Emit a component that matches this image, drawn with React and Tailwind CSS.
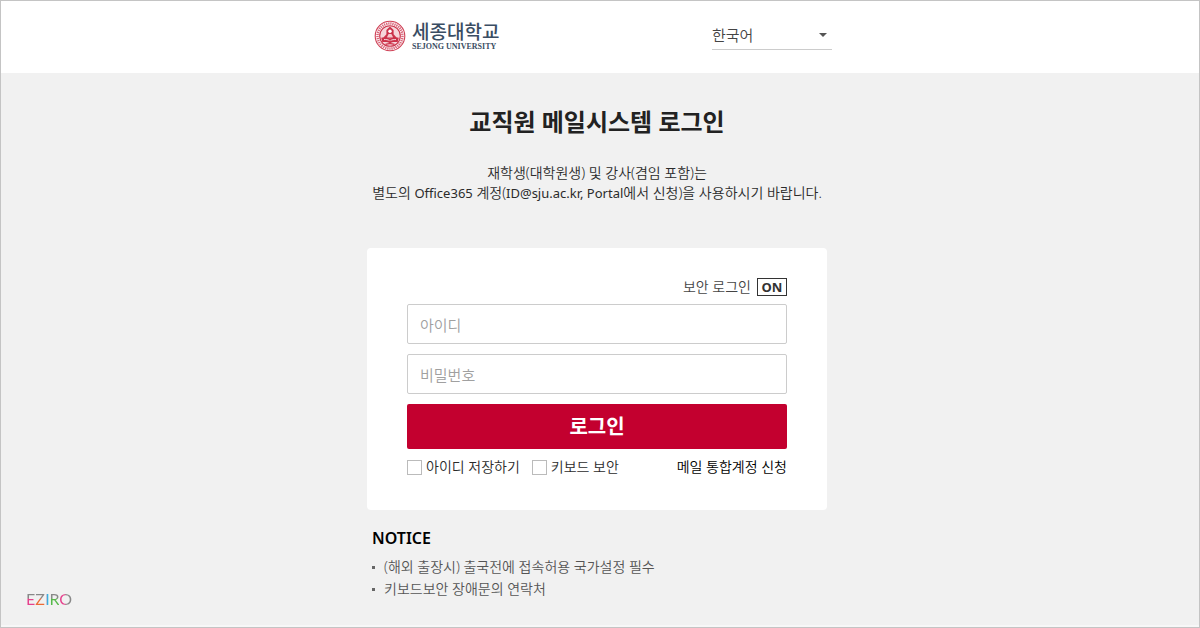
import { useState } from 'react';

const notices = [
  '(해외 출장시) 출국전에 접속허용 국가설정 필수',
  '키보드보안 장애문의 연락처',
];

function Emblem() {
  return (
    <svg viewBox="0 0 32 32" className="size-8 shrink-0" aria-hidden="true">
      <circle cx="16" cy="16" r="14.8" fill="#fff" stroke="#cf4055" strokeWidth="1.1" />
      <circle cx="16" cy="16" r="12.5" fill="none" stroke="#d8667a" strokeWidth="2.5" strokeDasharray="1.3 0.8" />
      <circle cx="16" cy="16" r="10.3" fill="#f6d5da" stroke="#cb3149" strokeWidth="1.1" />
      <path d="M16 6.4 19.6 10v4.2l4 4.6H8.400l4-4.600V10Z" fill="#cb3149" />
      <circle cx="16" cy="11.2" r="1.7" fill="#fff" />
      <path d="M14.6 14h2.8l1.8 3.4h-6.4Z" fill="#f5c6cd" />
      <path d="M7.2 17.8c3-.6 6.600-.4 8.800 1.200 2.200-1.600 5.800-1.800 8.800-1.200l-1.200 4.400c-2.600-.5-5.600-.2-7.600 1-2-1.200-5-1.500-7.600-1Z" fill="#cb3149" />
      <path d="M10 19.600c2-.2 4.200.1 5.500 1M22 19.600c-2-.2-4.200.1-5.500 1" fill="none" stroke="#fff" strokeWidth=".8" />
      <path d="M11.500 24.400c2.800-1 6.200-1 9 0" fill="none" stroke="#cb3149" strokeWidth="1.200" />
    </svg>
  );
}

function Check({ id, label }) {
  return (
    <label htmlFor={id} className="flex items-center gap-1">
      <input
        id={id}
        type="checkbox"
        className="size-[15px] shrink-0 appearance-none border border-[#bbb] bg-white checked:bg-[#c3002f]"
      />
      {label}
    </label>
  );
}

export default function App() {
  const [secure, setSecure] = useState(true);
  const field =
    'h-10 w-full rounded-xs border border-[#ccc] bg-white px-3 pt-0.5 text-[15px] text-[#333] placeholder:text-[#a0a0a0] outline-none focus:border-[#888]';

  return (
    <div className="flex min-h-screen flex-col border border-[#c4c4c4] bg-[#f1f1f1] font-['Noto_Sans','Noto_Sans_CJK_KR',sans-serif] font-[350] text-[#2b2b2b]">
      <header className="bg-white pr-1.5">
        <div className="mx-auto flex h-[72px] w-full max-w-[460px] items-center justify-between pb-[3px]">
          <a href="#home" className="ml-[7px] flex items-center gap-1.5">
            <Emblem />
            <span className="flex flex-col text-[#3a4d63]">
              <span className="font-['Noto_Sans_CJK_KR',sans-serif] text-[19px] leading-[22px] font-medium">세종대학교</span>
              <span className="font-['Liberation_Serif',serif] text-[8px] leading-[10px] font-bold">SEJONG UNIVERSITY</span>
            </span>
          </a>
          <div className="-mr-[5px] grid w-[120px] items-center border-b border-[#ccc]">
            <select
              aria-label="언어"
              className="col-start-1 row-start-1 h-7 appearance-none bg-transparent text-[15px] text-[#444] outline-none"
            >
              <option>한국어</option>
              <option>English</option>
            </select>
            <svg viewBox="0 0 8 4" className="pointer-events-none col-start-1 row-start-1 mr-[5px] h-1 w-2 justify-self-end" aria-hidden="true">
              <path d="M0 0h8L4 4Z" fill="#555" />
            </svg>
          </div>
        </div>
      </header>

      <main className="grid flex-1 grid-cols-[1fr_minmax(0,460px)_1fr] border-b-2 border-[#f7f7f7] pr-1.5">
        <div className="flex items-end pb-3.5 pl-[25px]">
          <div className="font-['Lato',sans-serif] text-base leading-6 font-normal" aria-label="EZIRO">
            <span className="bg-linear-to-b from-[#888] from-45% to-[#e6418d] to-55% bg-clip-text text-transparent">E</span>
            <span className="bg-linear-to-b from-[#888] from-45% to-[#ed6b34] to-55% bg-clip-text text-transparent">Z</span>
            <span className="text-[#3fa9d8]">I</span>
            <span className="bg-linear-to-b from-[#888] from-45% to-[#54b948] to-55% bg-clip-text text-transparent">R</span>
            <span className="bg-linear-to-r from-[#e6418d] from-45% to-[#888] to-55% bg-clip-text text-transparent">O</span>
          </div>
        </div>

        <div className="flex flex-col pt-[33px]">
          <h1 className="text-center text-2xl font-bold text-[#222]">교직원 메일시스템 로그인</h1>
          <p className="mt-[25px] text-center text-sm leading-5 whitespace-nowrap">
            재학생(대학원생) 및 강사(겸임 포함)는
            <br />
            별도의 <span className="text-[13px] font-normal">Office365</span> 계정(
            <span className="text-[13px] font-normal">ID@sju.ac.kr, Portal</span>에서 신청)을 사용하시기 바랍니다.
          </p>

          <form
            onSubmit={(e) => e.preventDefault()}
            className="mt-[45px] flex flex-col gap-2.5 rounded-sm bg-white px-10 pt-[29px] pb-[35px]"
          >
            <div className="flex flex-col gap-[7px]">
              <div className="flex items-center justify-end gap-1.5 text-sm text-[#444]">
                <span id="secure">보안 로그인</span>
                <button
                  type="button"
                  aria-labelledby="secure"
                  aria-pressed={secure}
                  onClick={() => setSecure(!secure)}
                  className="flex h-[18px] w-[30px] items-center justify-center border border-[#333] text-[13px] font-bold text-[#333]"
                >
                  {secure ? 'ON' : 'OFF'}
                </button>
              </div>
              <input type="text" aria-label="아이디" placeholder="아이디" className={field} />
            </div>
            <input type="password" aria-label="비밀번호" placeholder="비밀번호" className={field} />
            <button type="submit" className="h-[45px] rounded-xs bg-[#c3002f] text-xl font-bold text-white">
              로그인
            </button>
            <div className="flex items-center justify-between text-sm leading-4">
              <div className="flex gap-3">
                <Check id="save" label="아이디 저장하기" />
                <Check id="keyboard" label="키보드 보안" />
              </div>
              <a href="#apply" className="text-black">메일 통합계정 신청</a>
            </div>
          </form>

          <section className="pt-4 pl-[5px]">
            <h2 className="text-base font-semibold text-black">NOTICE</h2>
            <ul className="mt-1.5 text-sm leading-[22px] text-[#555]">
              {notices.map((n) => (
                <li key={n} className="flex items-center gap-[9px]">
                  <span className="size-[3px] bg-[#666]" />
                  <a href="#notice">{n}</a>
                </li>
              ))}
            </ul>
          </section>
        </div>
      </main>
    </div>
  );
}
